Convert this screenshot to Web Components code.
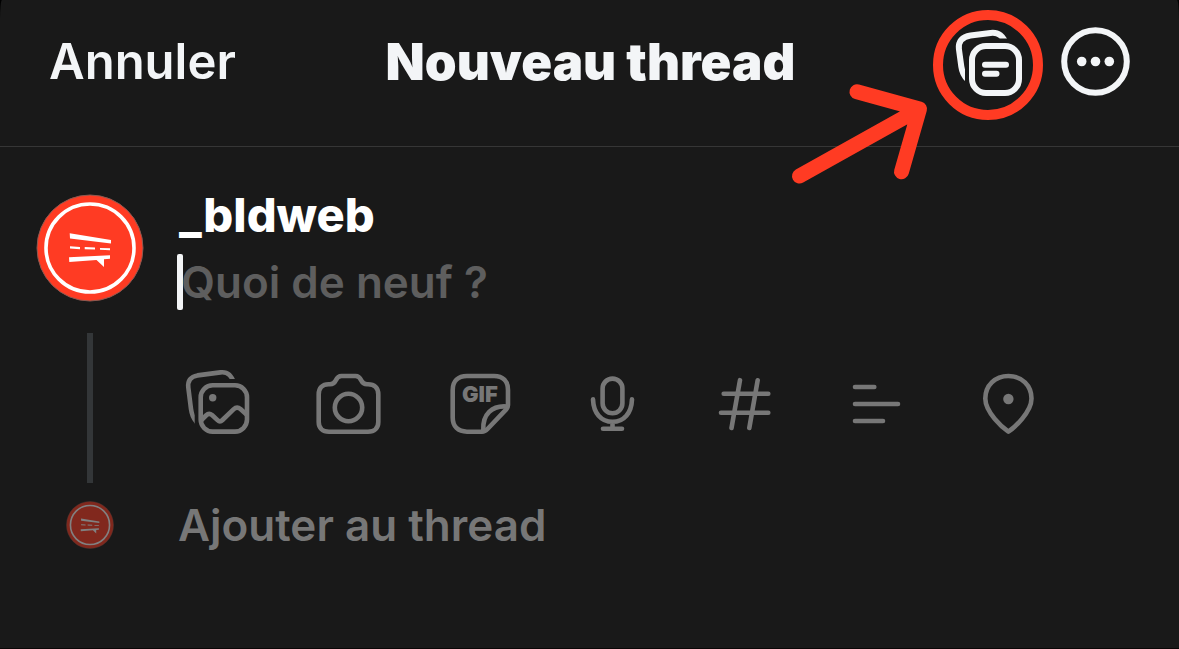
<!DOCTYPE html>
<html lang="fr">
<head>
<meta charset="utf-8">
<meta name="viewport" content="width=device-width, initial-scale=1">
<title>Nouveau thread</title>
<style>
  body { margin: 0; background: #000; font-family: Inter, "Liberation Sans", sans-serif; color: #f3f5f7; }
</style>
</head>
<body>
<thread-screen></thread-screen>
<script>
const define = (name, html, setup) => customElements.define(name, class extends HTMLElement {
  constructor() {
    super();
    this.attachShadow({ mode: 'open' }).innerHTML = html;
  }
  connectedCallback() { if (setup) setup(this, this.shadowRoot); }
});

const ICONS = {
  drafts: `<clipPath id="back-d"><path d="M0 0H72V12.600H24L12 24V72H0Z"/></clipPath>
    <g stroke-width="6"><rect x="19" y="20" width="47" height="47" rx="14"/>
    <path d="M32 38.700H53M32 47.700H43.500"/>
    <path clip-path="url(#back-d)" d="M54 20C50 9.500 45.500 5.900 37.500 6.900L17.500 9.500C9 10.800 5 15.500 5.900 23L8.300 40.500C9 46 11 50 15 54"/></g>`,
  more: `<circle cx="35.500" cy="35.500" r="31.300" stroke-width="6"/>
    <g fill="currentColor" stroke="none"><circle cx="21.700" cy="35.500" r="4.800"/><circle cx="35.500" cy="35.500" r="4.800"/><circle cx="49.300" cy="35.500" r="4.800"/></g>`,
  gallery: `<clipPath id="back-g"><path d="M0 0H72V11H24L13.700 24V72H0Z"/></clipPath>
    <rect x="19.700" y="17.300" width="46.300" height="46.300" rx="12"/>
    <path clip-path="url(#back-g)" d="M54 17C50.500 7.500 47 3.500 39.500 4.400L16.500 7.400C9.500 8.500 6.500 13 7.300 19.500L10 41C10.700 46.500 12 50 15.500 54"/>
    <circle cx="31.700" cy="29.700" r="3.700" fill="currentColor" stroke="none"/>
    <path d="M20.500 52L25 47.500Q28 44.500 31 47L36.500 52.200Q39 54.500 41.500 52L52.500 41.300Q56 38 59.500 41L65.500 46.500"/>`,
  camera: `<path d="M15.500 16.300H17C20 16.300 21.500 15 22.700 12.500C24.200 9.200 25.500 8 28.500 8H42.500C45.500 8 46.800 9.200 48.300 12.500C49.500 15 51 16.300 54 16.300H55C61.500 16.300 65.300 20 65.300 26.500V54C65.300 60 61.500 63.700 55 63.700H16C9.500 63.700 5.700 60 5.700 54V26.500C5.700 20 9.500 16.300 15.500 16.300Z"/>
    <circle cx="35.500" cy="39.500" r="13.700"/>`,
  gif: `<path d="M22 8H49C58 8 63 13 63 22V37Q63 39.500 61 41.700L42.500 61Q40 63.700 37 63.700H22C13 63.700 7.700 58.500 7.700 49.500V22C7.700 13 13 8 22 8Z"/>
    <path d="M61.500 38.500C47 37.500 37.500 46 38.300 62"/>
    <text x="17" y="34" font-family="Inter, sans-serif" font-size="22" font-weight="900" fill="currentColor" stroke="none">GIF</text>`,
  mic: `<rect x="25.600" y="10.600" width="19.800" height="34.600" rx="9.900"/>
    <path d="M16 31.300C16.500 45 24 53.800 35.500 53.800S54.500 45 55 31.300M35.500 54V60.800M26 60.800H45"/>`,
  tag: `<path d="M31 12.200L22.500 60M48.700 12.200L40.300 60M14.700 25.700H59.300M12 44.700H59.300"/>`,
  poll: `<path d="M14 19H33.300M14 36H57M14 53H42"/>`,
  pin: `<path d="M35.400 63.700C30 60 12.300 44.500 12.300 30.500C12.300 17.500 22 8 35.400 8S58.500 17.500 58.500 30.500C58.500 44.500 40.800 60 35.400 63.700Z"/>
    <circle cx="35.400" cy="31" r="5.200" fill="currentColor" stroke="none"/>`
};

define('icon-button', `
  <style>
    :host { display: block; }
    button { display: block; width: 72px; height: 72px; padding: 0; border: 0; background: none; color: inherit; cursor: pointer; }
    svg { display: block; }
  </style>
  <button type="button"></button>`, (host, root) => {
  const button = root.querySelector('button');
  button.setAttribute('aria-label', host.getAttribute('label'));
  button.innerHTML = `<svg viewBox="0 0 72 72" width="72" height="72" fill="none" stroke="currentColor" stroke-width="4.600" stroke-linecap="round" stroke-linejoin="round" aria-hidden="true">${ICONS[host.getAttribute('icon')]}</svg>`;
});

define('user-avatar', `
  <style>
    :host { display: block; width: 108px; height: 108px; flex: none; }
    :host([small]) { width: 48px; height: 48px; opacity: .45; }
    svg { display: block; width: 100%; height: 100%; }
  </style>
  <svg viewBox="0 0 108 108" role="img" aria-label="Photo de profil">
    <circle cx="54" cy="54" r="53" fill="#ff3b23" stroke="#8a5a52" stroke-width="1"/>
    <circle cx="54" cy="54" r="44" fill="none" stroke="#fff" stroke-width="3.600"/>
    <path fill="#fff" d="M33.700 39.300L75 46V49.500L34 44.500ZM34 52.300L44 53V55.300L34 54.600ZM48.700 53.100L59 53.500V55.600L48.700 55.300ZM64 53.900L74 54.300V56.300L64 55.800ZM33 63.300L74 61.300V64.800L68 65.300V73L60.500 66L33.300 68Z"/>
  </svg>`);

define('callout-arrow', `
  <style>
    :host { display: block; position: absolute; top: 0; right: 129px; pointer-events: none; }
    svg { display: block; }
  </style>
  <svg width="270" height="190" viewBox="0 0 270 190" fill="none" stroke="#ff3b23" stroke-linecap="round" stroke-linejoin="round" aria-hidden="true">
    <circle cx="208" cy="65" r="50" stroke-width="10"/>
    <path stroke-width="15" d="M19.500 176L139.500 109M77 91.700L139.500 109L121.500 171.700"/>
  </svg>`);

define('screen-header', `
  <style>
    :host { display: block; position: relative; border-bottom: 1px solid #363636; }
    header { display: grid; grid-template-columns: 1fr auto 1fr; align-items: center; padding: 26px 47px 48px 49px; }
    .cancel { justify-self: start; padding: 0; border: 0; background: none; color: inherit; font: 600 49px/60px Inter, sans-serif; cursor: pointer; }
    h1 { margin: 0; font: 900 51px/60px Inter, sans-serif; }
    .actions { justify-self: end; display: flex; gap: 35px; }
  </style>
  <header>
    <button class="cancel" type="button">Annuler</button>
    <h1><slot></slot></h1>
    <div class="actions">
      <icon-button icon="drafts" label="Brouillons"></icon-button>
      <icon-button icon="more" label="Plus"></icon-button>
    </div>
  </header>
  <callout-arrow></callout-arrow>`);

define('attach-bar', `
  <style>
    :host { display: flex; gap: 60px; color: #777; }
  </style>
  <icon-button icon="gallery" label="Galerie"></icon-button>
  <icon-button icon="camera" label="Appareil photo"></icon-button>
  <icon-button icon="gif" label="Ajouter un GIF"></icon-button>
  <icon-button icon="mic" label="Message vocal"></icon-button>
  <icon-button icon="tag" label="Sujet"></icon-button>
  <icon-button icon="poll" label="Sondage"></icon-button>
  <icon-button icon="pin" label="Lieu"></icon-button>`);

define('post-composer', `
  <style>
    :host { display: grid; grid-template-columns: 108px 1fr; column-gap: 33px; padding: 40px 36px 0; }
    .rail { display: flex; flex-direction: column; align-items: center; padding-top: 7px; }
    .line { flex: 1; width: 6px; margin-top: 31px; background: #333638; }
    h2 { margin: 0 0 11px 2px; font: 800 47px/56px Inter, sans-serif; color: #fff; }
    .field { display: flex; align-items: center; }
    .caret { flex: none; width: 6px; height: 56px; border-radius: 2px; background: #f3f5f7; }
    input { flex: 1; min-width: 0; height: 56px; margin-left: -2px; padding: 0; border: 0; outline: 0; background: none; color: inherit; font: 600 44px/56px Inter, sans-serif; }
    input::placeholder { color: #5e5e5e; opacity: 1; }
    attach-bar { margin: 58px 0 43px 4px; }
  </style>
  <div class="rail"><user-avatar></user-avatar><div class="line"></div></div>
  <div>
    <h2><slot></slot></h2>
    <div class="field"><span class="caret"></span><input type="text" aria-label="Nouveau message" placeholder="Quoi de neuf ?"></div>
    <attach-bar></attach-bar>
  </div>`);

define('add-to-thread', `
  <style>
    :host { display: grid; grid-template-columns: 108px 1fr; column-gap: 34px; align-items: center; justify-items: center; padding: 14px 36px 48px; }
    button { justify-self: start; padding: 0; border: 0; background: none; color: #777; font: 600 44px/56px Inter, sans-serif; cursor: pointer; }
  </style>
  <user-avatar small></user-avatar>
  <button type="button"><slot></slot></button>`);

define('thread-screen', `
  <style>
    :host { display: block; box-sizing: border-box; min-height: 100vh; background: #191919; border-bottom: 1px solid #0a0606; border-radius: 2px 2px 0 0 / 20px 20px 0 0; }
  </style>
  <screen-header>Nouveau thread</screen-header>
  <main>
    <post-composer>_bldweb</post-composer>
    <add-to-thread>Ajouter au thread</add-to-thread>
  </main>`);
</script>
</body>
</html>
